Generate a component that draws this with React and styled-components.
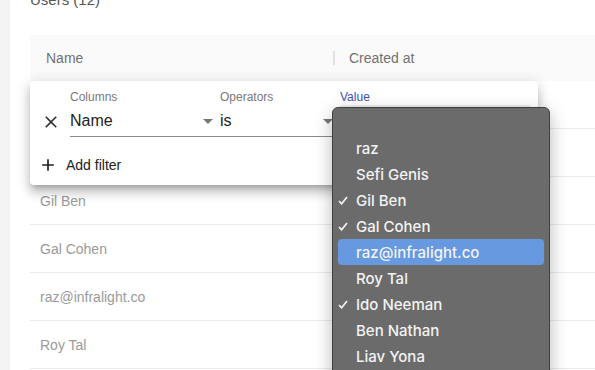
import React from "react";
import styled, { createGlobalStyle } from "styled-components";

const GlobalStyle = createGlobalStyle`
  html, body {
    margin: 0;
    padding: 0;
    height: 100%;
    overflow: hidden;
  }
  body {
    background: #f4f4f4;
    font-family: "Liberation Sans", Arial, sans-serif;
  }
`;

const users = ["raz", "Sefi Genis", "Gil Ben", "Gal Cohen", "raz@infralight.co", "Roy Tal"];

const options = [
  { label: "" },
  { label: "raz" },
  { label: "Sefi Genis" },
  { label: "Gil Ben", checked: true },
  { label: "Gal Cohen", checked: true },
  { label: "raz@infralight.co", active: true },
  { label: "Roy Tal" },
  { label: "Ido Neeman", checked: true },
  { label: "Ben Nathan" },
  { label: "Liav Yona" },
  { label: "Tom Levi" },
];

const Page = styled.div`
  display: flex;
  height: 370px;
  padding-left: 10px;
  overflow: hidden;
`;

const Card = styled.div`
  flex: 1;
  background: #fff;
  padding-left: 20px;
  overflow: hidden;
`;

const Title = styled.h2`
  margin: -10px 0 25px;
  font-size: 15px;
  font-weight: 400;
  line-height: 20px;
  color: #555;
`;

const Table = styled.div`
  position: relative;
  width: 620px;
`;

const HeaderRow = styled.div`
  display: grid;
  grid-template-columns: 303px 1fr;
  height: 46px;
  background: #fafafa;
`;

const HeaderCell = styled.div`
  display: flex;
  align-items: center;
  padding-left: ${(p) => p.$pad || 0}px;
  font-size: 14px;
  color: #727272;
`;

const Separator = styled.span`
  width: 2px;
  height: 14px;
  margin-right: 14px;
  background: #e2e2e2;
`;

const Row = styled.div`
  display: grid;
  grid-template-columns: 303px 1fr;
  height: 48px;
  box-sizing: border-box;
  border-bottom: 1px solid #ececec;
`;

const Cell = styled.div`
  display: flex;
  align-items: center;
  padding-left: 10px;
  font-size: 14px;
  color: #9a9a9a;
`;

const Panel = styled.div`
  position: absolute;
  top: 46px;
  left: 0;
  width: 508px;
  height: 104px;
  box-sizing: border-box;
  background: #fff;
  border-radius: 4px;
  box-shadow: 0 5px 5px -3px rgba(0, 0, 0, 0.2), 0 8px 10px 1px rgba(0, 0, 0, 0.14),
    0 3px 14px 2px rgba(0, 0, 0, 0.12);
  display: flex;
  flex-direction: column;
`;

const FormRow = styled.div`
  display: flex;
  align-items: flex-end;
  padding: 8px 0 0 7px;
`;

const CloseButton = styled.button`
  width: 28px;
  height: 28px;
  margin: 0 5px 1px 0;
  padding: 0;
  border: 0;
  background: none;
  display: flex;
  align-items: center;
  justify-content: center;
  color: #333;
`;

const Field = styled.div`
  width: ${(p) => p.$width}px;
  display: flex;
  flex-direction: column;
`;

const Label = styled.label`
  height: 16px;
  font-size: 12px;
  line-height: 16px;
  color: ${(p) => (p.$active ? "#3f51b5" : "#7a7a7a")};
`;

const Input = styled.div`
  position: relative;
  height: 32px;
  padding-top: 6px;
  box-sizing: border-box;
  font-size: 16px;
  line-height: 19px;
  color: #222;
  background: ${(p) => (p.$active ? "#ececec" : "transparent")};
  border-bottom: ${(p) => (p.$active ? "2px solid #3f51b5" : "1px solid #8a8a8a")};
`;

const Arrow = styled.svg`
  position: absolute;
  right: 0;
  top: 4px;
  width: 24px;
  height: 24px;
  fill: #777;
`;

const ActionRow = styled.div`
  display: flex;
  padding: 10px 0 2px 4px;
`;

const AddButton = styled.button`
  display: flex;
  align-items: center;
  gap: 8px;
  height: 36px;
  padding: 0 8px 0 4px;
  border: 0;
  background: none;
  font-family: "Liberation Sans", Arial, sans-serif;
  font-size: 14px;
  color: #222;
  svg {
    fill: #222;
  }
`;

const Menu = styled.ul`
  position: absolute;
  top: 72px;
  left: 302px;
  width: 218px;
  height: 300px;
  box-sizing: border-box;
  margin: 0;
  padding: 1px 0;
  list-style: none;
  background: #6b6b6b;
  border: 1px solid #404040;
  border-radius: 6px;
  box-shadow: 0 6px 18px rgba(0, 0, 0, 0.28);
  overflow: hidden;
`;

const Option = styled.li`
  display: flex;
  align-items: center;
  height: 26px;
  margin: 0 5px;
  border-radius: 4px;
  background: ${(p) => (p.$active ? "#6699e0" : "transparent")};
  font-family: Inter, "Noto Sans", sans-serif;
  font-size: 15px;
  font-weight: 500;
  color: #f3f3f3;
`;

const CheckSlot = styled.span`
  width: 18px;
  display: flex;
  align-items: center;
`;

const CloseIcon = () => (
  <svg width="20" height="20" viewBox="0 0 24 24" fill="currentColor">
    <path d="M19 6.41L17.59 5 12 10.59 6.41 5 5 6.41 10.59 12 5 17.59 6.41 19 12 13.41 17.59 19 19 17.59 13.41 12z" />
  </svg>
);

const DropIcon = () => (
  <Arrow viewBox="0 0 24 24">
    <path d="M7 10l5 5 5-5z" />
  </Arrow>
);

const Check = () => (
  <svg width="10" height="9" viewBox="0 0 10 9">
    <polyline points="1,5 3.6,7.8 9,1" fill="none" stroke="#f3f3f3" strokeWidth="1.7" />
  </svg>
);

const App = () => {
  return (
    <Page>
      <GlobalStyle />
      <Card>
        <Title>Users (12)</Title>
        <Table>
          <HeaderRow>
            <HeaderCell $pad={16}>Name</HeaderCell>
            <HeaderCell>
              <Separator />
              Created at
            </HeaderCell>
          </HeaderRow>
          {users.map((name) => (
            <Row key={name}>
              <Cell>{name}</Cell>
              <Cell />
            </Row>
          ))}

          <Panel>
            <FormRow>
              <CloseButton>
                <CloseIcon />
              </CloseButton>
              <Field $width={150}>
                <Label>Columns</Label>
                <Input>
                  Name
                  <DropIcon />
                </Input>
              </Field>
              <Field $width={120}>
                <Label>Operators</Label>
                <Input>
                  is
                  <DropIcon />
                </Input>
              </Field>
              <Field $width={190}>
                <Label $active>Value</Label>
                <Input $active />
              </Field>
            </FormRow>
            <ActionRow>
              <AddButton>
                <svg width="20" height="20" viewBox="0 0 24 24">
                  <path d="M19 13h-6v6h-2v-6H5v-2h6V5h2v6h6v2z" />
                </svg>
                Add filter
              </AddButton>
            </ActionRow>
          </Panel>

          <Menu>
            {options.map((o, i) => (
              <Option key={i} $active={o.active}>
                <CheckSlot>{o.checked && <Check />}</CheckSlot>
                {o.label}
              </Option>
            ))}
          </Menu>
        </Table>
      </Card>
    </Page>
  );
};

export default App;
